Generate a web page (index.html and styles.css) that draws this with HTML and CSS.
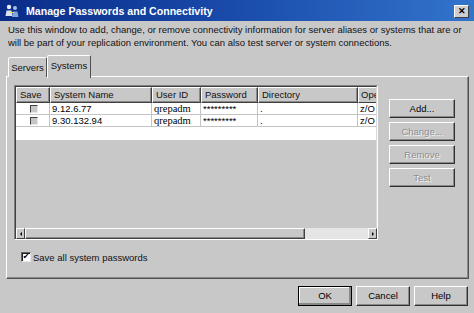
FILE: index.html
```html
<!DOCTYPE html>
<html>
<head>
<meta charset="utf-8">
<link rel="stylesheet" href="styles.css">
</head>
<body>
<div class="window">
  <div class="titlebar">
    <svg class="appicon" width="16" height="16" viewBox="0 0 16 16">
      <circle cx="5" cy="4" r="2.2" fill="#e8eef8"/>
      <path d="M1.5 13 L2.5 7.5 L7.5 7.5 L8.5 13 Z" fill="#d8e2f2"/>
      <circle cx="11" cy="5" r="2" fill="#9fc0e8"/>
      <path d="M8 14 L9 8.5 L13.5 8.5 L14.5 14 Z" fill="#7fa6d8"/>
      <path d="M6 9 L10 9 L10 10 L6 10 Z" fill="#f0d060"/>
    </svg>
    <span class="title">Manage Passwords and Connectivity</span>
    <div class="closebtn">&#x2715;</div>
  </div>

  <div class="desc">
    Use this window to add, change, or remove connectivity information for server aliases or systems that are or will be part of your replication environment. You can also test server or system connections.
  </div>

  <div class="tabs">
    <div class="tab">Servers</div>
    <div class="tab active">Systems</div>
  </div>

  <div class="panel">
    <div class="panel-main">
      <div class="list">
        <div class="list-view">
          <div class="hdr">
            <div class="hc c-save">Save</div>
            <div class="hc c-name">System Name</div>
            <div class="hc c-user">User ID</div>
            <div class="hc c-pass">Password</div>
            <div class="hc c-dir">Directory</div>
            <div class="hc c-os">Ope</div>
          </div>
          <div class="rows">
            <div class="row">
              <div class="dc c-save"><span class="cb-dis"></span></div>
              <div class="dc c-name">9.12.6.77</div>
              <div class="dc c-user serif">qrepadm</div>
              <div class="dc c-pass">*********</div>
              <div class="dc c-dir">.</div>
              <div class="dc c-os">z/O</div>
            </div>
            <div class="row">
              <div class="dc c-save"><span class="cb-dis"></span></div>
              <div class="dc c-name">9.30.132.94</div>
              <div class="dc c-user serif">qrepadm</div>
              <div class="dc c-pass">*********</div>
              <div class="dc c-dir">.</div>
              <div class="dc c-os">z/O</div>
            </div>
          </div>
        </div>
        <div class="hscroll">
          <div class="sbtn"><span class="arr-l"></span></div>
          <div class="thumb"></div>
          <div class="track"></div>
          <div class="sbtn"><span class="arr-r"></span></div>
        </div>
      </div>
      <div class="sidebtns">
        <div class="btn">Add...</div>
        <div class="btn disabled">Change...</div>
        <div class="btn disabled">Remove</div>
        <div class="btn disabled">Test</div>
      </div>
    </div>
    <label class="saveall">
      <span class="cb-on">&#x2714;</span>
      <span>Save all system passwords</span>
    </label>
  </div>

  <div class="footer">
    <div class="btn fbtn default">OK</div>
    <div class="btn fbtn">Cancel</div>
    <div class="btn fbtn">Help</div>
  </div>
</div>
</body>
</html>
```

FILE: styles.css
```css
* { box-sizing: border-box; }
html, body {
  margin: 0;
  padding: 0;
}
body {
  width: 474px;
  height: 313px;
  overflow: hidden;
  background: #c9c8c9;
  font-family: "Liberation Sans", Arial, sans-serif;
  font-size: 9.5px;
  color: #111;
}
.window {
  display: flex;
  flex-direction: column;
  width: 474px;
  height: 313px;
}
.titlebar {
  height: 21px;
  flex: none;
  display: flex;
  align-items: center;
  padding-left: 4px;
  padding-right: 5px;
  background: linear-gradient(to right, #0a2c88 0%, #1848a8 45%, #3274cc 100%);
}
.appicon { flex: none; }
.title {
  margin-left: 6px;
  color: #fff;
  font-weight: bold;
  font-size: 10.6px;
  flex: 1;
}
.closebtn {
  width: 15px;
  height: 13px;
  background: #cfcdcf;
  border: 1px solid;
  border-color: #fff #404040 #404040 #fff;
  font-size: 9px;
  font-weight: bold;
  line-height: 11px;
  text-align: center;
  color: #000;
  margin-top: 1px;
}
.desc {
  padding: 2px 6px 0 8px;
  line-height: 13px;
  height: 27px;
  flex: none;
}
.tabs {
  display: flex;
  align-items: flex-end;
  margin-left: 8px;
  margin-top: 7px;
  height: 22px;
  flex: none;
  position: relative;
  z-index: 1;
  margin-bottom: -1px;
}
.tab {
  height: 20px;
  padding: 0;
  border: 1px solid;
  border-bottom: none;
  border-color: #fff #505050 transparent #fff;
  border-radius: 2px 2px 0 0;
  line-height: 19px;
  text-align: center;
  background: #c9c8c9;
  width: 39px;
}
.tab.active {
  height: 23px;
  width: 44px;
  line-height: 19px;
  margin-bottom: -1px;
}
.panel {
  margin-left: 6px;
  width: 463px;
  height: 203px;
  flex: none;
  border: 1px solid;
  border-color: #fff #505050 #505050 #fff;
  box-shadow: inset -1px -1px 0 #8a898a;
  padding: 8px 0 0 7px;
  display: flex;
  flex-direction: column;
}
.panel-main {
  display: flex;
  gap: 11px;
}
.list {
  width: 364px;
  height: 155px;
  border: 1px solid;
  border-color: #808080 #fff #fff #808080;
  display: flex;
  flex-direction: column;
  flex: none;
}
.list-view {
  flex: 1;
  border: 1px solid;
  border-color: #404040 #d8d8d8 transparent #404040;
  border-bottom: none;
  overflow: hidden;
}
.hdr {
  display: flex;
  height: 16px;
}
.hc {
  flex: none;
  height: 16px;
  line-height: 14px;
  padding-left: 3px;
  border: 1px solid;
  border-color: #fff #404040 #404040 #fff;
  box-shadow: inset -1px -1px 0 #8a898a;
  white-space: nowrap;
  overflow: hidden;
}
.c-save { width: 34px; }
.c-name { width: 102px; }
.c-user { width: 49px; }
.c-pass { width: 57px; }
.c-dir { width: 100px; }
.c-os { width: 24px; }
.hc.c-os { padding-left: 2px; border-right: none; box-shadow: none; }
.rows {
  background: #fff;
  height: 37px;
}
.row {
  display: flex;
  height: 12px;
}
.dc {
  flex: none;
  height: 12px;
  line-height: 11px;
  padding-left: 2px;
  border-right: 1px solid #c4c4c4;
  border-bottom: 1px solid #c4c4c4;
  white-space: nowrap;
  overflow: hidden;
  color: #000;
}
.dc.c-save {
  display: flex;
  justify-content: center;
  align-items: center;
  padding-left: 2px;
}
.dc.c-os { border-right: none; }
.serif {
  font-family: "Liberation Serif", "Times New Roman", serif;
  font-size: 10.5px;
}
.cb-dis {
  width: 8px;
  height: 8px;
  background: #c6c6c6;
  border: 1px solid;
  border-color: #404040 #e8e8e8 #e8e8e8 #404040;
}
.hscroll {
  height: 11px;
  display: flex;
  flex: none;
  background: #c9c8c9;
  border-left: 1px solid #404040;
}
.sbtn {
  width: 9px;
  height: 11px;
  border: 1px solid;
  border-color: #fff #404040 #404040 #fff;
  display: flex;
  align-items: center;
  justify-content: center;
  flex: none;
}
.arr-l {
  width: 0; height: 0;
  border-top: 2px solid transparent;
  border-bottom: 2px solid transparent;
  border-right: 2px solid #000;
}
.arr-r {
  width: 0; height: 0;
  border-top: 2px solid transparent;
  border-bottom: 2px solid transparent;
  border-left: 2px solid #000;
}
.thumb {
  width: 280px;
  height: 11px;
  flex: none;
  border: 1px solid;
  border-color: #fff #404040 #404040 #fff;
  box-shadow: inset -1px -1px 0 #8a898a;
}
.track {
  flex: 1;
  background: #e6e5e6;
}
.sidebtns {
  display: flex;
  flex-direction: column;
  gap: 4px;
  margin-top: 14px;
}
.btn {
  height: 19px;
  border: 1px solid;
  border-color: #fff #303030 #303030 #fff;
  box-shadow: inset -1px -1px 0 #8a898a;
  text-align: center;
  line-height: 17px;
  background: #c9c8c9;
  color: #000;
}
.sidebtns .btn { width: 66px; }
.btn.disabled {
  color: #8e8e8e;
  text-shadow: 1px 1px 0 #f4f4f4;
}
.saveall {
  display: flex;
  align-items: center;
  gap: 2px;
  margin-top: 11px;
  margin-left: 7px;
  height: 12px;
}
.cb-on {
  width: 10px;
  height: 10px;
  background: #fff;
  border: 1px solid;
  border-color: #606060 #e8e8e8 #e8e8e8 #606060;
  box-shadow: inset 1px 1px 0 #202020;
  font-size: 8px;
  line-height: 8px;
  text-align: center;
  color: #000;
  font-family: "DejaVu Sans", sans-serif;
}
.footer {
  display: flex;
  justify-content: flex-end;
  gap: 4px;
  margin-top: 7px;
  padding-right: 6px;
}
.fbtn {
  width: 54px;
  height: 20px;
  line-height: 18px;
}
.fbtn.default {
  outline: 1px solid #000;
  outline-offset: -1px;
  border-color: #fff #303030 #303030 #fff;
  box-shadow: inset -2px -2px 0 #8a898a, inset 1px 1px 0 #fff;
}
```
